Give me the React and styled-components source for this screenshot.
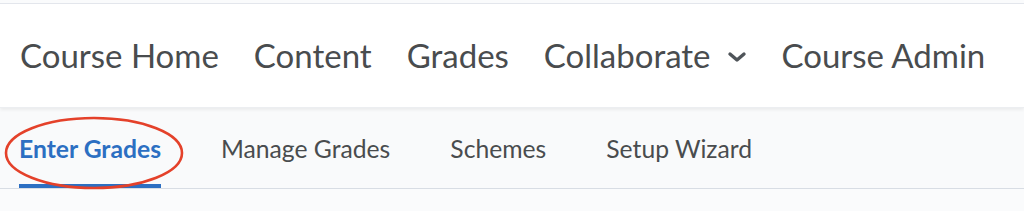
import React from 'react';
import styled, { createGlobalStyle } from 'styled-components';

const GlobalStyle = createGlobalStyle`
  html, body {
    margin: 0;
    padding: 0;
    background: #fafbfc;
  }
  body {
    font-family: Lato, "Open Sans", sans-serif;
  }
`;

const App = () => {
  return (
    <Page>
      <GlobalStyle />
      <TopNav>
        <TopLink>Course Home</TopLink>
        <TopLink>Content</TopLink>
        <TopLink>Grades</TopLink>
        <TopLink>
          Collaborate
          <Chevron viewBox="0 0 20 12">
            <path d="M3 3 L10 9 L17 3" fill="none" stroke="#4f5459" strokeWidth="3.4" strokeLinecap="round" strokeLinejoin="round" />
          </Chevron>
        </TopLink>
        <TopLink>Course Admin</TopLink>
      </TopNav>
      <SubNav>
        <Tabs>
          <Tab active>
            Enter Grades
            <Circle viewBox="0 0 184 74">
              <ellipse cx="91" cy="37" rx="88" ry="35" fill="none" stroke="#e4412a" strokeWidth="2.6" />
            </Circle>
          </Tab>
          <Tab>Manage Grades</Tab>
          <Tab>Schemes</Tab>
          <Tab>Setup Wizard</Tab>
        </Tabs>
      </SubNav>
    </Page>
  );
};

export default App;

const Page = styled.div`
  width: 1024px;
  height: 211px;
  overflow: hidden;
  background: #fafbfc;
`;

const TopNav = styled.div`
  height: 103px;
  margin-top: 3px;
  border-top: 1px solid #e3e6ec;
  background: #ffffff;
  display: flex;
  align-items: center;
  gap: 35px;
  padding: 0 20px;
  box-shadow: 0 2px 3px rgba(0, 0, 0, 0.06);
  position: relative;
  z-index: 1;
  border-bottom: 1px solid #eceef1;
`;

const TopLink = styled.div`
  display: flex;
  align-items: center;
  gap: 16px;
  font-size: 33px;
  color: #494c4e;
  white-space: nowrap;
  margin-top: -2px;
`;

const Chevron = styled.svg`
  width: 20px;
  height: 12px;
  margin-top: 4px;
`;

const SubNav = styled.div`
  background: #f9fafb;
  height: 80px;
  border-bottom: 1px solid #d8dde4;
  padding: 0 19px;
`;

const Tabs = styled.div`
  display: flex;
  height: 100%;
  gap: 60px;
`;

const Tab = styled.div`
  position: relative;
  display: flex;
  align-items: center;
  padding-top: 4px;
  height: 100%;
  box-sizing: border-box;
  font-size: 24.7px;
  font-weight: ${p => (p.active ? 700 : 400)};
  color: ${p => (p.active ? '#2c6fc2' : '#494c4e')};
  white-space: nowrap;
  border-bottom: 4px solid ${p => (p.active ? '#2c6fc2' : 'transparent')};
  margin-bottom: -1px;
`;

const Circle = styled.svg`
  position: absolute;
  left: -16px;
  top: 8px;
  width: 184px;
  height: 74px;
  overflow: visible;
`;
